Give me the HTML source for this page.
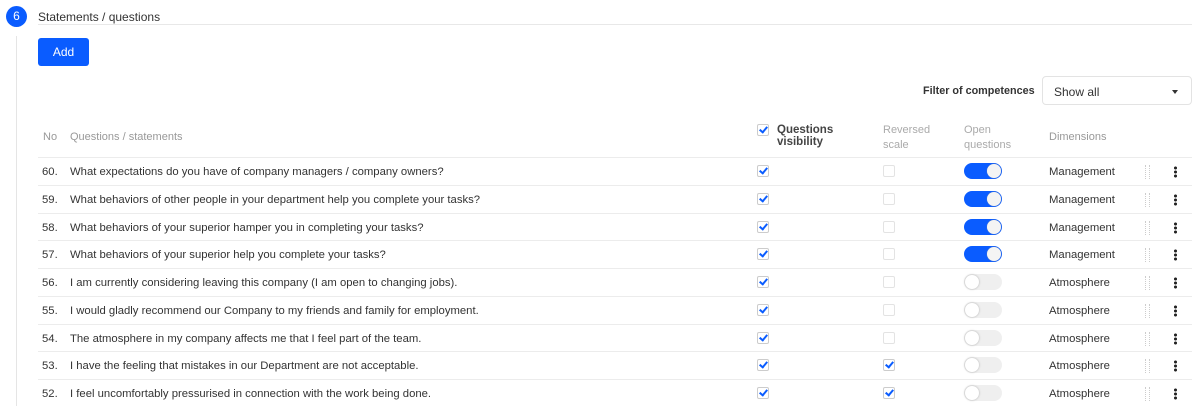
<!DOCTYPE html>
<html><head><style>
*{margin:0;padding:0;box-sizing:border-box}
body{width:1200px;height:406px;overflow:hidden;background:#fff;font-family:"Liberation Sans",sans-serif;color:#333;position:relative}
.abs{position:absolute}
.cb{position:absolute;width:12px;height:12px;border:1px solid #ccc;border-radius:2px;background:#fff}
.cb.on::after{content:"";position:absolute;left:3px;top:0px;width:3px;height:6px;border:solid #0a5cff;border-width:0 2px 2px 0;transform:rotate(40deg)}
.cb.off{border-color:#e3e3e3}
.tg{position:absolute;left:964px;width:38px;height:16px;border-radius:8px;background:#0a5cff}
.tg::after{content:"";position:absolute;right:1px;top:1px;width:14px;height:14px;border-radius:50%;background:#f4f4f4;box-shadow:0 0 1px #999}
.tg.off{background:#efefef}
.tg.off::after{left:1px;right:auto;background:#fff;box-shadow:0 0 2px #aaa}
.row{position:absolute;left:38px;width:1154px;height:28px;border-top:1px solid #ececec;font-size:11.3px}
.row span{position:absolute;top:8px}
.grip{position:absolute;left:1107px;top:7px;width:5px;height:14px;border-left:1px dotted #ccc;border-right:1px dotted #ccc}
.dots{position:absolute;left:1136px;top:8px;width:3px;height:12px;background:radial-gradient(circle,#222 1.4px,transparent 1.6px) 0 0/3px 4px repeat-y}
</style></head><body>
<div class="abs" style="left:6px;top:6px;width:21px;height:21px;border-radius:50%;background:#0a5cff;color:#fff;font-size:12px;text-align:center;line-height:21px">6</div>
<div class="abs" style="left:38px;top:10px;font-size:12px;color:#333">Statements / questions</div>
<div class="abs" style="left:38px;top:24px;width:1154px;height:1px;background:#e8e8e8"></div>
<div class="abs" style="left:16px;top:36px;width:1px;height:370px;background:#e5e5e5"></div>
<div class="abs" style="left:38px;top:38px;width:51px;height:28px;border-radius:3px;background:#0a5cff;color:#fff;font-size:12px;text-align:center;line-height:28px">Add</div>
<div class="abs" style="left:923px;top:85px;font-size:10.8px;font-weight:bold;color:#333">Filter of competences</div>
<div class="abs" style="left:1042px;top:76px;width:150px;height:29px;border:1px solid #e3e3e3;border-radius:4px;font-size:12px;padding:8px 0 0 11px">Show all<span style="position:absolute;right:13px;top:13px;border:3.5px solid transparent;border-top:4px solid #333"></span></div>
<div class="abs" style="left:43px;top:131px;font-size:11px;color:#999">No</div>
<div class="abs" style="left:70px;top:131px;font-size:11px;color:#999">Questions / statements</div>
<div class="cb on" style="left:757px;top:124px"></div>
<div class="abs" style="left:777px;top:124px;font-size:11.5px;font-weight:bold;color:#444;line-height:12px">Questions<br>visibility</div>
<div class="abs" style="left:883px;top:123px;font-size:11px;color:#aaa;line-height:15px">Reversed<br>scale</div>
<div class="abs" style="left:964px;top:123px;font-size:11px;color:#aaa;line-height:15px">Open<br>questions</div>
<div class="abs" style="left:1049px;top:131px;font-size:11px;color:#999">Dimensions</div>
<div id="rows"></div>
<script>
var d=[["60.","What expectations do you have of company managers / company owners?",0,1,"Management"],
["59.","What behaviors of other people in your department help you complete your tasks?",0,1,"Management"],
["58.","What behaviors of your superior hamper you in completing your tasks?",0,1,"Management"],
["57.","What behaviors of your superior help you complete your tasks?",0,1,"Management"],
["56.","I am currently considering leaving this company (I am open to changing jobs).",0,0,"Atmosphere"],
["55.","I would gladly recommend our Company to my friends and family for employment.",0,0,"Atmosphere"],
["54.","The atmosphere in my company affects me that I feel part of the team.",0,0,"Atmosphere"],
["53.","I have the feeling that mistakes in our Department are not acceptable.",1,0,"Atmosphere"],
["52.","I feel uncomfortably pressurised in connection with the work being done.",1,0,"Atmosphere"]];
var h="";
d.forEach(function(r,i){var y=157+i*27.75;
h+='<div class="row" style="top:'+y+'px"><span style="left:4px">'+r[0]+'</span><span style="left:32px">'+r[1]+'</span><span style="left:1011px">'+r[4]+'</span><div class="grip"></div><div class="dots"></div></div>';
h+='<div class="cb on" style="left:757px;top:'+(y+8)+'px"></div>';
h+='<div class="cb '+(r[2]?'on':'off')+'" style="left:883px;top:'+(y+8)+'px"></div>';
h+='<div class="tg '+(r[3]?'':'off')+'" style="top:'+(y+6)+'px"></div>';});
document.getElementById("rows").innerHTML=h;
</script>
</body></html>
